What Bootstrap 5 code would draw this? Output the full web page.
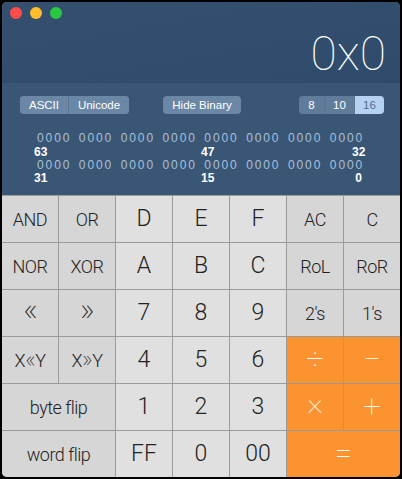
<!DOCTYPE html>
<html lang="en">
<head>
<meta charset="utf-8">
<title>Calculator</title>
<link rel="stylesheet" href="https://cdn.jsdelivr.net/npm/bootstrap@5.3.0/dist/css/bootstrap.min.css">
<style>
html, body { height: 100%; }
body { background: #000; padding: 2px; overflow: hidden; font-family: "Liberation Sans", Arial, sans-serif; }
.calc-win { width: 398px; height: 475px; border-radius: 5px; overflow: hidden; background: #9b9b9b; }
.calc-title { height: 81px; background: linear-gradient(170deg, #35506f 0%, #2f4b6b 100%); }
.tl-dot { width: 12px; height: 12px; border-radius: 50%; }
.tl-red { background: #fc4b4a; }
.tl-yellow { background: #fdbc2c; }
.tl-green { background: #28c93f; }
.tl-row { padding: 5px 0 0 8px; gap: 8px; }
.calc-display { font-family: Roboto, sans-serif; font-weight: 100; font-size: 48px; line-height: 1; color: #fff; padding: 0 14px 0 0; margin-top: 11px; letter-spacing: 0; }
.calc-panel { height: 112px; background: #3a5675; padding-top: 13px; }
.seg-wrap { padding: 0 0 0 18px; }
.seg-group { height: 18px; border-radius: 4px; overflow: hidden; background: #62809f; }
.seg-btn { border: 0; padding: 0; background: #6a87a6; color: #fff; font-size: 11.5px; line-height: 18px; height: 18px; text-align: center; }
.seg-btn + .seg-btn { border-left: 1px solid #587593; }
.w-ascii { width: 48px; } .w-uni { width: 61px; } .w-hide { width: 78px; }
.w-8 { width: 25px; } .w-10 { width: 30px; } .w-16 { width: 30px; }
.seg-mid { margin-left: 34px; }
.seg-right { margin-left: 58px; }
.seg-dark { background: #5f7c9b; }
.seg-on, .seg-btn.seg-on { background: #b6d2f2; color: #4e6b8b; }
.bin-block { margin-top: 18px; padding: 0 0 0 35px; }
.bin-digits { color: #a9c0da; font-size: 12px; line-height: 12.5px; letter-spacing: 1.9px; word-spacing: 2.3px; white-space: nowrap; height: 12.5px; }
.bin-labels { width: 331px; margin-left: -3px; height: 14px; color: #fff; font-size: 12px; font-weight: 700; line-height: 14px; }
.lab-first { width: 167px; }
.lab-last { width: 13px; text-align: center; }
.key-grid { display: grid; grid-template-columns: repeat(7, 1fr); grid-auto-rows: 46px; gap: 1px; padding-top: 1px; background: #9b9b9b; }
.key-cell { display: flex; align-items: center; justify-content: center; font-family: Roboto, "Liberation Sans", sans-serif; font-weight: 300; color: #222; background: #e0e0e0; }
.k-num { font-size: 23px; }
.k-fn { background: #d6d6d6; font-size: 18px; letter-spacing: -.5px; }
.k-wide { grid-column: span 2; }
.k-op { background: #fa9330; color: #fff; font-size: 31px; font-weight: 100; }
.k-times { padding-bottom: 7px; }
.k-chev { font-size: 34px; font-weight: 100; padding-bottom: 8px; }
.chev-in { font-size: 24px; font-weight: 100; line-height: 1; margin-bottom: 3px; }
</style>
</head>
<body>
<div class="calc-win d-flex flex-column">
  <div class="calc-title">
    <div class="tl-row d-flex">
      <div class="tl-dot tl-red"></div><div class="tl-dot tl-yellow"></div><div class="tl-dot tl-green"></div>
    </div>
    <div class="calc-display text-end">0x0</div>
  </div>
  <div class="calc-panel">
    <div class="seg-wrap d-flex">
      <div class="seg-group d-flex"><button class="seg-btn w-ascii">ASCII</button><button class="seg-btn w-uni">Unicode</button></div>
      <div class="seg-group seg-mid d-flex"><button class="seg-btn w-hide">Hide Binary</button></div>
      <div class="seg-group seg-right d-flex"><button class="seg-btn seg-dark w-8">8</button><button class="seg-btn seg-dark w-10">10</button><button class="seg-btn seg-on w-16">16</button></div>
    </div>
    <div class="bin-block">
      <div class="bin-digits">0000 0000 0000 0000 0000 0000 0000 0000</div>
      <div class="bin-labels d-flex"><span class="lab-first">63</span><span class="flex-grow-1">47</span><span class="lab-last">32</span></div>
      <div class="bin-digits">0000 0000 0000 0000 0000 0000 0000 0000</div>
      <div class="bin-labels d-flex"><span class="lab-first">31</span><span class="flex-grow-1">15</span><span class="lab-last">0</span></div>
    </div>
  </div>
  <div class="key-grid">
    <div class="key-cell k-fn">AND</div><div class="key-cell k-fn">OR</div><div class="key-cell k-num">D</div><div class="key-cell k-num">E</div><div class="key-cell k-num">F</div><div class="key-cell k-fn">AC</div><div class="key-cell k-fn">C</div>
    <div class="key-cell k-fn">NOR</div><div class="key-cell k-fn">XOR</div><div class="key-cell k-num">A</div><div class="key-cell k-num">B</div><div class="key-cell k-num">C</div><div class="key-cell k-fn">RoL</div><div class="key-cell k-fn">RoR</div>
    <div class="key-cell k-fn k-chev">«</div><div class="key-cell k-fn k-chev">»</div><div class="key-cell k-num">7</div><div class="key-cell k-num">8</div><div class="key-cell k-num">9</div><div class="key-cell k-fn">2's</div><div class="key-cell k-fn">1's</div>
    <div class="key-cell k-fn"><span>X</span><span class="chev-in">«</span><span>Y</span></div><div class="key-cell k-fn"><span>X</span><span class="chev-in">»</span><span>Y</span></div><div class="key-cell k-num">4</div><div class="key-cell k-num">5</div><div class="key-cell k-num">6</div><div class="key-cell k-op">÷</div><div class="key-cell k-op">−</div>
    <div class="key-cell k-fn k-wide">byte flip</div><div class="key-cell k-num">1</div><div class="key-cell k-num">2</div><div class="key-cell k-num">3</div><div class="key-cell k-op k-times">×</div><div class="key-cell k-op">+</div>
    <div class="key-cell k-fn k-wide">word flip</div><div class="key-cell k-num">FF</div><div class="key-cell k-num">0</div><div class="key-cell k-num">00</div><div class="key-cell k-op k-wide">=</div>
  </div>
</div>
</body>
</html>
